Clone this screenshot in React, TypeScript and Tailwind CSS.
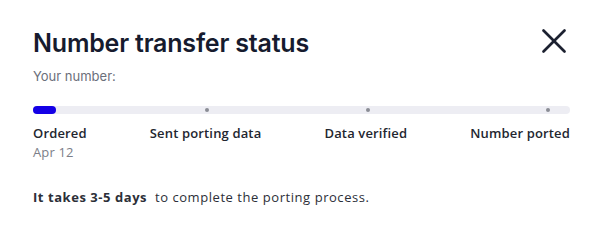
const steps = ["Ordered", "Sent porting data", "Data verified", "Number ported"];

const App = () => {
  return (
    <div className="w-[600px] h-[240px] bg-white px-[33px] pt-[28px] font-['Inter',sans-serif]">
      <div className="flex justify-between items-start">
        <h1 className="text-[25px] leading-[30px] font-semibold text-[#161b2e] tracking-[-0.2px]">
          Number transfer status
        </h1>
        <button className="mt-[1px] mr-[1px] text-[#1c2130]">
          <svg width="24" height="24" viewBox="0 0 24 24" fill="none" stroke="currentColor" strokeWidth="2.6" strokeLinecap="round">
            <line x1="1.5" y1="1.5" x2="22.5" y2="22.5" />
            <line x1="22.5" y1="1.5" x2="1.5" y2="22.5" />
          </svg>
        </button>
      </div>
      <p className="mt-[10px] text-[13px] leading-[16px] text-[#6b6f7b]">
        Your number:
      </p>

      {/* Barra de progreso */}
      <div className="relative mt-[22px] h-[8px] w-[537px] rounded-full bg-[#ededf3]">
        <div className="h-full w-[23px] rounded-full bg-[#1400e6]" />
        <span className="absolute left-[32%] top-[2px] h-[4px] w-[4px] rounded-full bg-[#8a8c95]" />
        <span className="absolute left-[62%] top-[2px] h-[4px] w-[4px] rounded-full bg-[#8a8c95]" />
        <span className="absolute left-[95.5%] top-[2px] h-[4px] w-[4px] rounded-full bg-[#8a8c95]" />
      </div>

      <div className="mt-[11px] flex w-[537px] justify-between font-['Open_Sans',sans-serif] text-[13px] tracking-[0.15px] font-semibold text-[#23262f]">
        {steps.map((step, i) => (
          <div key={step}>
            <div className="leading-[16px]">{step}</div>
            {i === 0 && (
              <div className="mt-[3px] leading-[16px] font-medium text-[#7b7e88]">
                Apr 12
              </div>
            )}
          </div>
        ))}
      </div>

      <p className="mt-[28px] font-['Open_Sans',sans-serif] text-[13px] tracking-[0.55px] text-[#2c2f38]">
        <span className="font-bold">It takes 3-5 days</span>
        <span className="whitespace-pre">  to complete the porting process.</span>
      </p>
    </div>
  );
};

export default App;
